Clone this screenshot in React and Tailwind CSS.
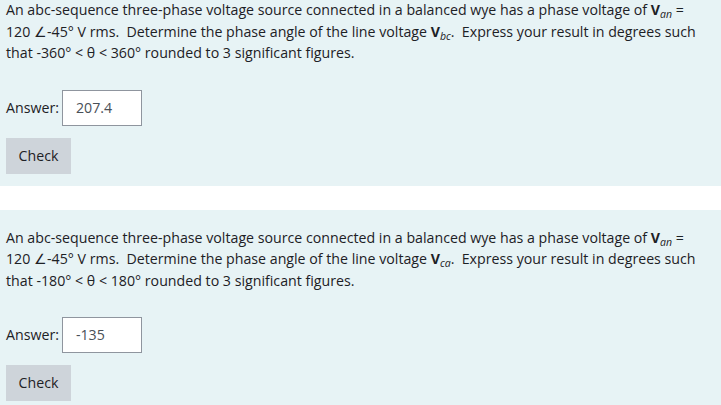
import React from "react";

function Sub({ children }) {
  return <span className="italic text-[10.5px] leading-none relative top-[3px]">{children}</span>;
}

function Q({ sub, range, value, first }) {
  return (
    <div className={`bg-[#e7f3f5] px-[6px] ${first ? "pt-0 pb-[12px] -mt-[1px]" : "pt-[17px] pb-[4px]"}`}>
      <div className="text-[14.2px] leading-[21.5px] text-[#1d2125] whitespace-nowrap">
        <div>
          An abc-sequence three-phase voltage source connected in a balanced wye has a phase voltage of <b>V</b><Sub>an</Sub> =
        </div>
        <div>
          120 ∠-45° V rms.&nbsp; Determine the phase angle of the line voltage <b>V</b><Sub>{sub}</Sub>.&nbsp; Express your result in degrees such
        </div>
        <div>that {range} rounded to 3 significant figures.</div>
      </div>
      <div className="mt-[26px] flex items-center gap-[3px] text-[14.2px] text-[#1d2125]">
        <span>Answer:</span>
        <div className="w-[80px] h-[36px] border border-[#8f959e] bg-white flex items-center pl-[13px] text-[#495057]">
          {value}
        </div>
      </div>
      <div className="mt-[12px] w-[65px] h-[36px] bg-[#ced4da] flex items-center justify-center text-[14.2px] text-[#1d2125]">
        Check
      </div>
    </div>
  );
}

export default function App() {
  return (
    <div className="w-[721px] h-[405px] overflow-hidden bg-white" style={{ fontFamily: '"Open Sans", "Noto Sans", sans-serif' }}>
      <Q first sub="bc" range="-360° < θ < 360°" value="207.4" />
      <div className="h-[24px]" />
      <Q sub="ca" range="-180° < θ < 180°" value="-135" />
    </div>
  );
}
